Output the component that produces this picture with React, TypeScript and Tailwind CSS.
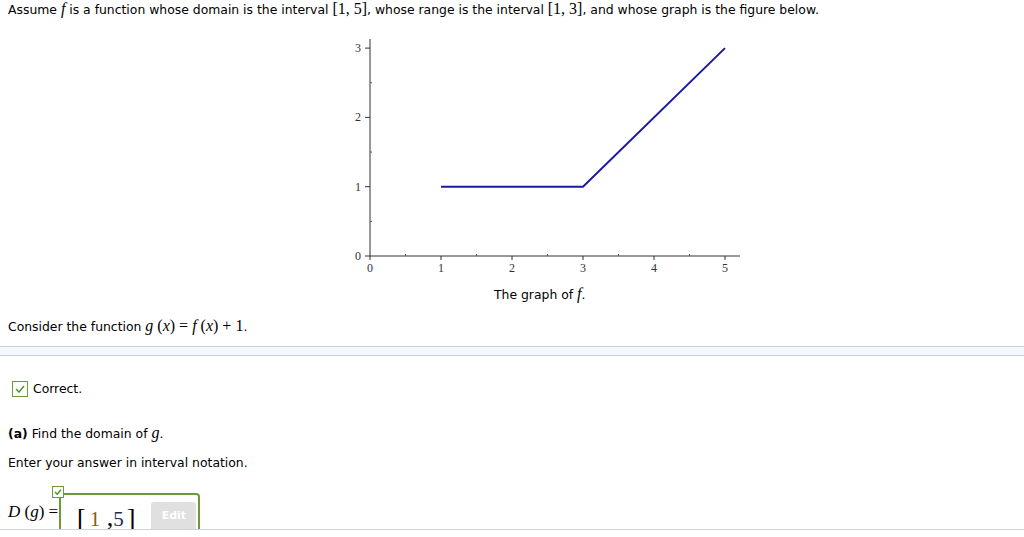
import React from 'react';

const serif = { fontFamily: '"Liberation Serif", "Times New Roman", serif' };

function M({ children }: { children: React.ReactNode }) {
  return <span className="font-['Liberation_Serif',serif] text-[16px]">{children}</span>;
}

function Graph() {
  const x0 = 20;
  const y0 = 221;
  const ux = 71;
  const uy = 69.3;
  const X = (v: number) => x0 + v * ux;
  const Y = (v: number) => y0 - v * uy;
  const xs = [0, 1, 2, 3, 4, 5];
  const halfX = [0.5, 1.5, 2.5, 3.5, 4.5];
  return (
    <svg width="400" height="240" viewBox="0 0 400 240" className="block">
      <line x1={x0} y1={4} x2={x0} y2={y0} stroke="#333" strokeWidth="1" />
      <line x1={x0} y1={y0} x2={390} y2={y0} stroke="#333" strokeWidth="1" />
      {[0, 1, 2, 3].map((v) => (
        <g key={v}>
          <line x1={x0 - 5} y1={Y(v)} x2={x0} y2={Y(v)} stroke="#333" />
          <text x={x0 - 9} y={Y(v) + 4} textAnchor="end" fontSize="12" fill="#333" style={serif}>{v}</text>
        </g>
      ))}
      {[0.5, 1.5, 2.5].map((v) => (
        <line key={v} x1={x0} y1={Y(v)} x2={x0 + 2} y2={Y(v)} stroke="#555" />
      ))}
      {xs.map((v) => (
        <g key={v}>
          <line x1={X(v)} y1={y0} x2={X(v)} y2={y0 + 4} stroke="#333" />
          <text x={X(v)} y={y0 + 16} textAnchor="middle" fontSize="12" fill="#333" style={serif}>{v}</text>
        </g>
      ))}
      {halfX.map((v) => (
        <line key={v} x1={X(v)} y1={y0 - 2} x2={X(v)} y2={y0} stroke="#555" />
      ))}
      <polyline points={`${X(1)},${Y(1)} ${X(3)},${Y(1)} ${X(5)},${Y(3)}`} fill="none" stroke="#1a1aa0" strokeWidth="2" />
    </svg>
  );
}

export default function App() {
  return (
    <div className="relative h-[537px] w-[1024px] overflow-hidden bg-white font-['DejaVu_Sans',Verdana,sans-serif] text-[12.4px] text-black">
      <p className="pl-2 pt-[0px] leading-[18px]">
        Assume <M><i>f</i></M> is a function whose domain is the interval <M>[1, 5]</M>, whose range is the interval <M>[1, 3]</M>, and whose graph is the figure below.
      </p>

      <div className="ml-[350px] mt-[16px]">
        <Graph />
        <p className="ml-[144px] mt-[10px] leading-[18px]">The graph of <M><i>f</i></M>.</p>
      </div>

      <p className="mt-[13px] pl-2 leading-[18px]">
        Consider the function <M><i>g</i> (<i>x</i>) = <i>f</i> (<i>x</i>) + 1</M>.
      </p>

      <div className="mt-[10px] h-[10px] border-y border-[#c8d0da] bg-[#f4f8fc]" />

      <div className="mt-[24px] flex items-center pl-[12px]">
        <span className="flex h-[16px] w-[16px] items-center justify-center border border-[#6a9a3a] bg-white">
          <svg width="10" height="8" viewBox="0 0 10 8"><path d="M1 4 L4 7 L9 1" fill="none" stroke="#4a9a2a" strokeWidth="1.5" /></svg>
        </span>
        <span className="ml-[5px]">Correct.</span>
      </div>

      <p className="mt-[25px] pl-2 leading-[18px]">
        <b>(a)</b> Find the domain of <M><i>g</i></M>.
      </p>
      <p className="mt-[11px] pl-2 leading-[18px]">Enter your answer in interval notation.</p>

      <div className="relative mt-[14px] h-[60px]">
        <span className="absolute left-[8px] top-[13px] text-[17px]" style={serif}>
          <i>D</i> (<i>g</i>) =
        </span>
        <span className="absolute left-[52px] top-[0px] z-10 flex h-[12px] w-[12px] items-center justify-center border border-[#6a9a3a] bg-white">
          <svg width="8" height="6" viewBox="0 0 10 8"><path d="M1 4 L4 7 L9 1" fill="none" stroke="#4a9a2a" strokeWidth="2" /></svg>
        </span>
        <div className="absolute left-[59px] top-[7px] flex h-[60px] w-[141px] items-start rounded-tr-[4px] border-2 border-[#6a9a3a] bg-white pl-[16px] pt-[5px]">
          <span className="mt-[4px] text-[26px] leading-[28px]" style={serif}>
            [<span className="ml-[4px] text-[21px] text-[#8a5a10]">1</span> ,<span className="text-[21px] text-[#1a2a5a]">5</span><span className="ml-[3px]">]</span>
          </span>
          <span className="ml-[16px] mt-[2px] flex h-[30px] w-[45px] items-center justify-center rounded-[3px] bg-[#e0e0e0] text-[11px] font-bold text-white">Edit</span>
        </div>
      </div>

      <div className="absolute left-0 top-[529px] h-[8px] w-full border-t border-[#d0d4d8] bg-white" />
    </div>
  );
}
